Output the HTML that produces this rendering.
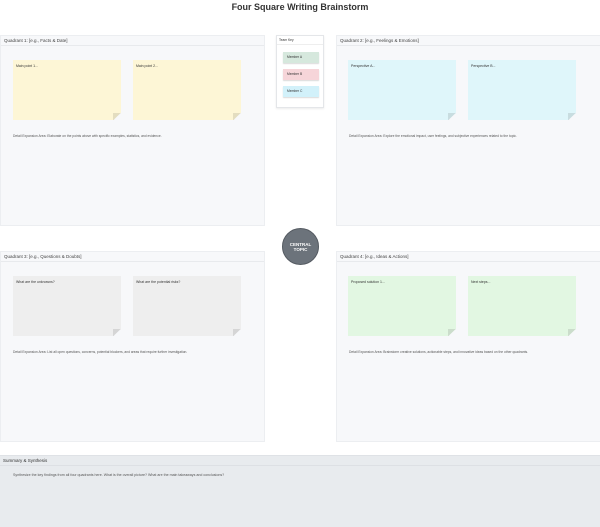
<!DOCTYPE html>
<html><head><style>
*{margin:0;padding:0;box-sizing:border-box}
body{width:600px;height:527px;background:#fff;font-family:"Liberation Sans",sans-serif;position:relative;overflow:hidden;color:#333}
.a{position:absolute}
h1{position:absolute;top:2px;left:0;width:600px;text-align:center;font-size:9px;font-weight:bold;color:#333}
.q{position:absolute;width:265px;height:191px;background:#f7f8fa;border:1px solid #eceef1}
.qh{height:10px;border-bottom:1px solid #e8eaed;font-size:4.5px;line-height:10px;padding-left:3px;color:#444}
.s{position:absolute;top:24px;width:108px;height:60px;font-size:3.5px;padding:4px 3px;box-shadow:0 1px 2px rgba(0,0,0,.18);clip-path:polygon(0 0,100% 0,100% 88%,93% 100%,0 100%)}
.s:after{content:"";position:absolute;right:0;bottom:0;width:8px;height:7px;background:rgba(0,0,0,.1)}
.d{position:absolute;top:98px;left:12px;font-size:3.3px;color:#555}
.y{background:#fdf6d6}.b{background:#dff6fa}.g{background:#eeeeee}.gr{background:#e2f7e2}
.m{position:absolute;left:6px;width:36px;height:11px;font-size:3.3px;padding:3px 4px;box-shadow:0 1px 1px rgba(0,0,0,.15)}
</style></head><body>
<h1>Four Square Writing Brainstorm</h1>

<div class="q" style="left:0;top:35px"><div class="qh">Quadrant 1: [e.g., Facts &amp; Date]</div>
<div class="s y" style="left:12px">Main point 1...</div><div class="s y" style="left:132px">Main point 2...</div>
<div class="d">Detail Expansion Area: Elaborate on the points above with specific examples, statistics, and evidence.</div></div>

<div class="q" style="left:336px;top:35px"><div class="qh">Quadrant 2: [e.g., Feelings &amp; Emotions]</div>
<div class="s b" style="left:11px">Perspective A...</div><div class="s b" style="left:131px">Perspective B...</div>
<div class="d">Detail Expansion Area: Explore the emotional impact, user feelings, and subjective experiences related to the topic.</div></div>

<div class="q" style="left:0;top:251px"><div class="qh">Quadrant 3: [e.g., Questions &amp; Doubts]</div>
<div class="s g" style="left:12px">What are the unknowns?</div><div class="s g" style="left:132px">What are the potential risks?</div>
<div class="d">Detail Expansion Area: List all open questions, concerns, potential blockers, and areas that require further investigation.</div></div>

<div class="q" style="left:336px;top:251px"><div class="qh">Quadrant 4: [e.g., Ideas &amp; Actions]</div>
<div class="s gr" style="left:11px">Proposed solution 1...</div><div class="s gr" style="left:131px">Next steps...</div>
<div class="d">Detail Expansion Area: Brainstorm creative solutions, actionable steps, and innovative ideas based on the other quadrants.</div></div>

<div class="a" style="left:276px;top:35px;width:48px;height:73px;background:#fff;border:1px solid #e4e6e9;box-shadow:0 1px 2px rgba(0,0,0,.08)">
<div style="font-size:3.3px;padding:2px 2px;border-bottom:1px solid #eee">Team Key</div>
<div class="m" style="top:16px;background:#d6e8dd">Member A</div>
<div class="m" style="top:33px;background:#f6d5d9">Member B</div>
<div class="m" style="top:50px;background:#d2f1fa">Member C</div>
</div>

<div class="a" style="left:282px;top:228px;width:37px;height:37px;border-radius:50%;background:#6c737b;border:1px solid #555b62;color:#fff;font-size:4.5px;font-weight:bold;text-align:center;padding-top:13px;line-height:5px">CENTRAL<br>TOPIC</div>

<div class="a" style="left:0;top:455px;width:600px;height:72px;background:#e8ebee;border-top:1px solid #dfe2e6">
<div style="height:10px;font-size:4.5px;line-height:9px;padding-left:3px;border-bottom:1px solid #dde0e4">Summary &amp; Synthesis</div>
<div style="font-size:3.6px;color:#555;padding:7px 0 0 13px">Synthesize the key findings from all four quadrants here. What is the overall picture? What are the main takeaways and conclusions?</div>
</div>
</body></html>
